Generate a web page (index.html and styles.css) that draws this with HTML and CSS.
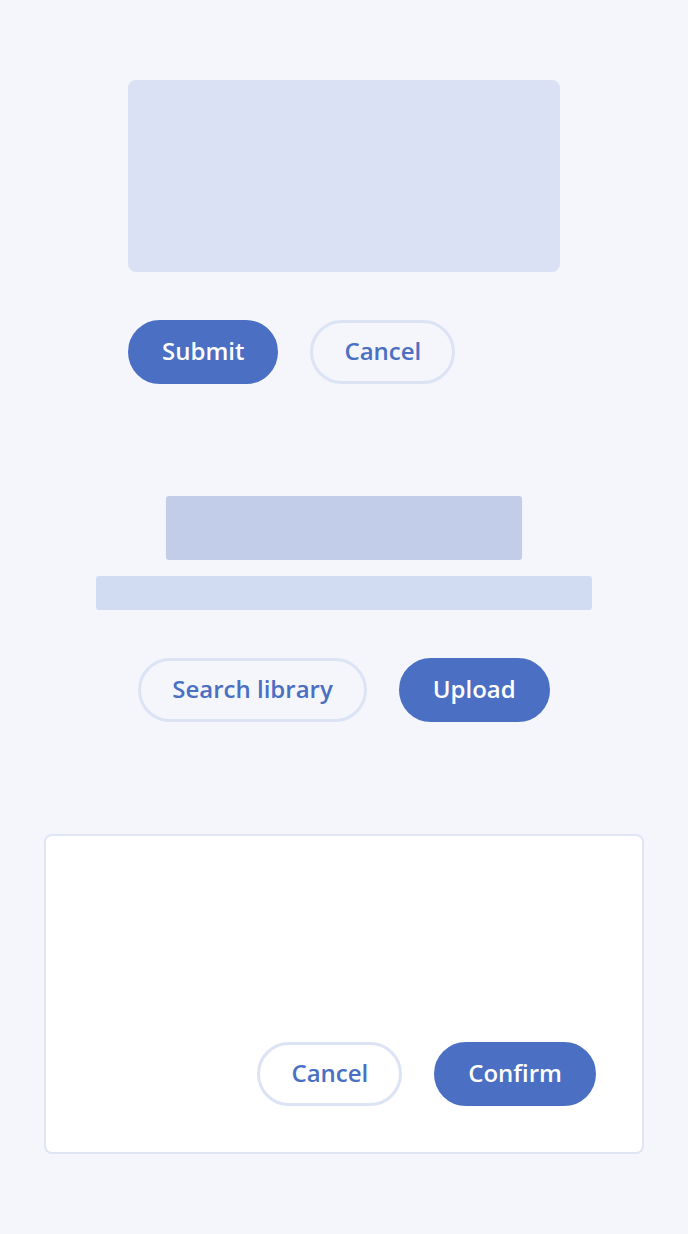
FILE: index.html
```html
<!DOCTYPE html>
<html lang="en">
<head>
  <meta charset="UTF-8">
  <meta name="viewport" content="width=device-width, initial-scale=1.0">
  <title>Buttons</title>
  <link rel="stylesheet" href="styles.css">
</head>
<body>
  <div class="page">
    <section class="form-block">
      <div class="textarea"></div>
      <div class="actions">
        <button class="btn btn-primary">Submit</button>
        <button class="btn btn-outline">Cancel</button>
      </div>
    </section>

    <section class="empty-block">
      <div class="title-bar"></div>
      <div class="text-bar"></div>
      <div class="actions center">
        <button class="btn btn-outline">Search library</button>
        <button class="btn btn-primary">Upload</button>
      </div>
    </section>

    <section class="dialog">
      <div class="actions right">
        <button class="btn btn-outline">Cancel</button>
        <button class="btn btn-primary">Confirm</button>
      </div>
    </section>
  </div>
</body>
</html>
```

FILE: styles.css
```css
* {
  margin: 0;
  padding: 0;
  box-sizing: border-box;
}

body {
  font-family: "Open Sans", Arial, sans-serif;
  background-color: #f4f6fb;
  width: 688px;
  height: 1234px;
}

.page {
  display: flex;
  flex-direction: column;
  align-items: center;
  padding-top: 80px;
}

.form-block {
  width: 432px;
}

.textarea {
  height: 192px;
  background-color: #dbe1f4;
  border-radius: 8px;
}

.actions {
  display: flex;
  gap: 32px;
  margin-top: 48px;
}

.actions.center {
  justify-content: center;
}

.actions.right {
  justify-content: flex-end;
  margin-top: 0;
}

.btn {
  height: 64px;
  padding: 0 31px 3px;
  border-radius: 32px;
  border: 3px solid transparent;
  font-family: inherit;
  font-size: 24px;
  font-weight: 600;
  cursor: pointer;
}

.btn-primary {
  background-color: #4a6fc3;
  border-color: #4a6fc3;
  color: #fff;
}

.btn-outline {
  background-color: transparent;
  border-color: #dbe3f4;
  color: #4a6fc3;
}

.empty-block {
  width: 496px;
  margin-top: 112px;
  display: flex;
  flex-direction: column;
  align-items: center;
}

.title-bar {
  width: 356px;
  height: 64px;
  background-color: #c2cdea;
  border-radius: 3px;
}

.text-bar {
  width: 496px;
  height: 34px;
  margin-top: 16px;
  background-color: #d1dcf3;
  border-radius: 3px;
}

.empty-block .actions {
  margin-top: 48px;
}

.dialog {
  width: 600px;
  height: 320px;
  margin-top: 112px;
  background-color: #fff;
  border: 2px solid #dfe5f5;
  border-radius: 8px;
  padding: 0 46px 46px;
  display: flex;
  flex-direction: column;
  justify-content: flex-end;
}
```
